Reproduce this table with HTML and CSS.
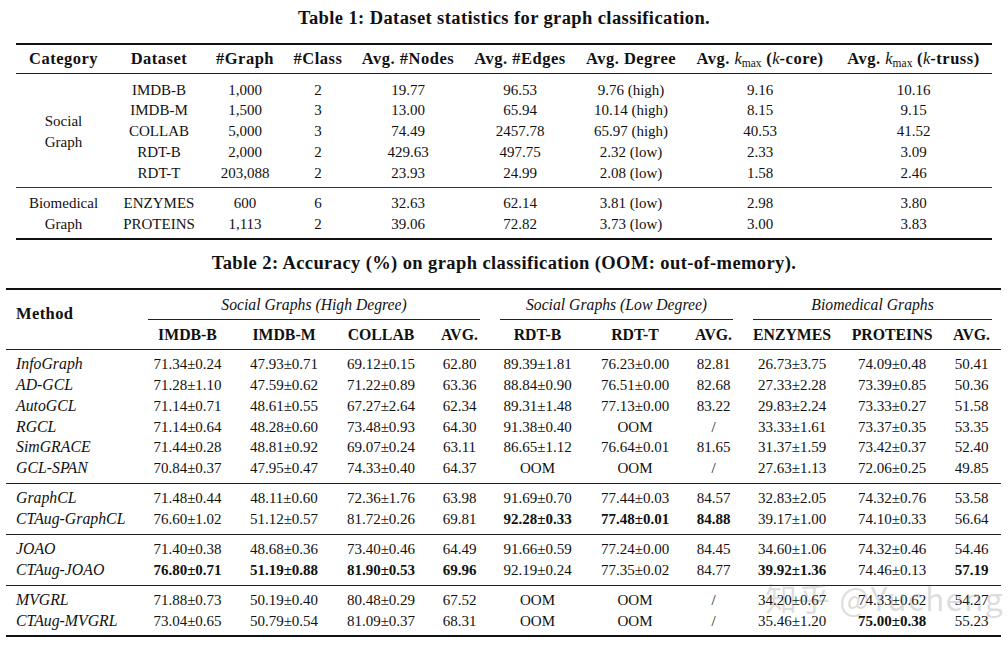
FILE: index.html
```html
<!DOCTYPE html>
<html>
<head>
<meta charset="utf-8">
<link rel="stylesheet" href="styles.css">
</head>
<body>
<div class="page">
  <div class="caption cap1">Table 1: Dataset statistics for graph classification.</div>
  <table class="t1">
    <colgroup>
      <col class="w95"><col class="w96"><col class="w76"><col class="w70"><col class="w110"><col class="w114"><col class="w108"><col class="w150"><col class="w157">
    </colgroup>
    <thead>
      <tr>
        <th>Category</th><th>Dataset</th><th>#Graph</th><th>#Class</th><th>Avg. #Nodes</th><th>Avg. #Edges</th><th>Avg. Degree</th>
        <th>Avg. <span class="k">k</span><span class="sub">max</span> (<span class="k">k</span>-core)</th>
        <th>Avg. <span class="k">k</span><span class="sub">max</span> (<span class="k">k</span>-truss)</th>
      </tr>
    </thead>
    <tbody>
      <tr class="first"><td rowspan="5" class="cat">Social<br>Graph</td><td>IMDB-B</td><td>1,000</td><td>2</td><td>19.77</td><td>96.53</td><td>9.76 (high)</td><td>9.16</td><td>10.16</td></tr>
      <tr><td>IMDB-M</td><td>1,500</td><td>3</td><td>13.00</td><td>65.94</td><td>10.14 (high)</td><td>8.15</td><td>9.15</td></tr>
      <tr><td>COLLAB</td><td>5,000</td><td>3</td><td>74.49</td><td>2457.78</td><td>65.97 (high)</td><td>40.53</td><td>41.52</td></tr>
      <tr><td>RDT-B</td><td>2,000</td><td>2</td><td>429.63</td><td>497.75</td><td>2.32 (low)</td><td>2.33</td><td>3.09</td></tr>
      <tr class="last"><td>RDT-T</td><td>203,088</td><td>2</td><td>23.93</td><td>24.99</td><td>2.08 (low)</td><td>1.58</td><td>2.46</td></tr>
    </tbody>
    <tbody>
      <tr class="first"><td rowspan="2" class="cat">Biomedical<br>Graph</td><td>ENZYMES</td><td>600</td><td>6</td><td>32.63</td><td>62.14</td><td>3.81 (low)</td><td>2.98</td><td>3.80</td></tr>
      <tr class="last"><td>PROTEINS</td><td>1,113</td><td>2</td><td>39.06</td><td>72.82</td><td>3.73 (low)</td><td>3.00</td><td>3.83</td></tr>
    </tbody>
  </table>

  <div class="caption cap2">Table 2: Accuracy (%) on graph classification (OOM: out-of-memory).</div>
  <table class="t2">
    <colgroup>
      <col class="w134"><col class="w95"><col class="w98"><col class="w96"><col class="w61"><col class="w95"><col class="w100"><col class="w57"><col class="w100"><col class="w100"><col class="w59">
    </colgroup>
    <thead>
      <tr class="grouprow">
        <th rowspan="2" class="method">Method</th>
        <th colspan="4" class="grp"><div class="cmid g1">Social Graphs (High Degree)</div></th>
        <th colspan="3" class="grp"><div class="cmid g2">Social Graphs (Low Degree)</div></th>
        <th colspan="3" class="grp"><div class="cmid g3">Biomedical Graphs</div></th>
      </tr>
      <tr class="subrow">
        <th>IMDB-B</th><th>IMDB-M</th><th>COLLAB</th><th>AVG.</th>
        <th>RDT-B</th><th>RDT-T</th><th>AVG.</th>
        <th>ENZYMES</th><th>PROTEINS</th><th>AVG.</th>
      </tr>
    </thead>
    <tbody>
      <tr class="first"><td class="m">InfoGraph</td><td>71.34±0.24</td><td>47.93±0.71</td><td>69.12±0.15</td><td>62.80</td><td>89.39±1.81</td><td>76.23±0.00</td><td>82.81</td><td>26.73±3.75</td><td>74.09±0.48</td><td>50.41</td></tr>
      <tr><td class="m">AD-GCL</td><td>71.28±1.10</td><td>47.59±0.62</td><td>71.22±0.89</td><td>63.36</td><td>88.84±0.90</td><td>76.51±0.00</td><td>82.68</td><td>27.33±2.28</td><td>73.39±0.85</td><td>50.36</td></tr>
      <tr><td class="m">AutoGCL</td><td>71.14±0.71</td><td>48.61±0.55</td><td>67.27±2.64</td><td>62.34</td><td>89.31±1.48</td><td>77.13±0.00</td><td>83.22</td><td>29.83±2.24</td><td>73.33±0.27</td><td>51.58</td></tr>
      <tr><td class="m">RGCL</td><td>71.14±0.64</td><td>48.28±0.60</td><td>73.48±0.93</td><td>64.30</td><td>91.38±0.40</td><td>OOM</td><td>/</td><td>33.33±1.61</td><td>73.37±0.35</td><td>53.35</td></tr>
      <tr><td class="m">SimGRACE</td><td>71.44±0.28</td><td>48.81±0.92</td><td>69.07±0.24</td><td>63.11</td><td>86.65±1.12</td><td>76.64±0.01</td><td>81.65</td><td>31.37±1.59</td><td>73.42±0.37</td><td>52.40</td></tr>
      <tr class="last"><td class="m">GCL-SPAN</td><td>70.84±0.37</td><td>47.95±0.47</td><td>74.33±0.40</td><td>64.37</td><td>OOM</td><td>OOM</td><td>/</td><td>27.63±1.13</td><td>72.06±0.25</td><td>49.85</td></tr>
    </tbody>
    <tbody>
      <tr class="first"><td class="m">GraphCL</td><td>71.48±0.44</td><td>48.11±0.60</td><td>72.36±1.76</td><td>63.98</td><td>91.69±0.70</td><td>77.44±0.03</td><td>84.57</td><td>32.83±2.05</td><td>74.32±0.76</td><td>53.58</td></tr>
      <tr class="last"><td class="m">CTAug-GraphCL</td><td>76.60±1.02</td><td>51.12±0.57</td><td>81.72±0.26</td><td>69.81</td><td class="b">92.28±0.33</td><td class="b">77.48±0.01</td><td class="b">84.88</td><td>39.17±1.00</td><td>74.10±0.33</td><td>56.64</td></tr>
    </tbody>
    <tbody>
      <tr class="first"><td class="m">JOAO</td><td>71.40±0.38</td><td>48.68±0.36</td><td>73.40±0.46</td><td>64.49</td><td>91.66±0.59</td><td>77.24±0.00</td><td>84.45</td><td>34.60±1.06</td><td>74.32±0.46</td><td>54.46</td></tr>
      <tr class="last"><td class="m">CTAug-JOAO</td><td class="b">76.80±0.71</td><td class="b">51.19±0.88</td><td class="b">81.90±0.53</td><td class="b">69.96</td><td>92.19±0.24</td><td>77.35±0.02</td><td>84.77</td><td class="b">39.92±1.36</td><td>74.46±0.13</td><td class="b">57.19</td></tr>
    </tbody>
    <tbody>
      <tr class="first"><td class="m">MVGRL</td><td>71.88±0.73</td><td>50.19±0.40</td><td>80.48±0.29</td><td>67.52</td><td>OOM</td><td>OOM</td><td>/</td><td>34.20±0.67</td><td>74.33±0.62</td><td>54.27</td></tr>
      <tr class="last"><td class="m">CTAug-MVGRL</td><td>73.04±0.65</td><td>50.79±0.54</td><td>81.09±0.37</td><td>68.31</td><td>OOM</td><td>OOM</td><td>/</td><td>35.46±1.20</td><td class="b">75.00±0.38</td><td>55.23</td></tr>
    </tbody>
  </table>
  <div class="watermark">知乎 @Yucheng</div>
</div>
</body>
</html>
```

FILE: styles.css
```css
html, body {
  margin: 0;
  padding: 0;
  background: #ffffff;
}
body {
  font-family: "Liberation Serif", "Times New Roman", serif;
  color: #111;
}
.page {
  position: relative;
  width: 1008px;
  height: 645px;
  overflow: hidden;
  display: flex;
  flex-direction: column;
  align-items: flex-start;
}
.caption {
  width: 1008px;
  text-align: center;
  font-weight: bold;
  font-size: 18.5px;
  letter-spacing: 0.4px;
  line-height: 20px;
}
.cap1 { margin-top: 8px; }
.cap2 { margin-top: 13px; }

table {
  border-collapse: collapse;
  table-layout: fixed;
  border-top: 2px solid #111;
  border-bottom: 2px solid #111;
}
th, td {
  padding: 0;
  text-align: center;
  white-space: nowrap;
}

/* Table 1 */
.t1 {
  margin-top: 15px;
  margin-left: 16px;
  width: 976px;
  font-size: 15px;
}
.t1 th {
  font-weight: bold;
  font-size: 16.5px;
  letter-spacing: 0.5px;
  height: 28px;
  line-height: 28px;
  border-bottom: 1px solid #222;
}
.t1 td { line-height: 20.8px; }
.t1 tbody + tbody { border-top: 1px solid #333; }
.t1 tr.first td { padding-top: 5.5px; }
.t1 tr.last td { padding-bottom: 3px; }
.t1 td.cat { padding: 0 0 3px 0; vertical-align: middle; line-height: 21px; }
.k { font-style: italic; font-weight: normal; letter-spacing: 0; }
.sub { font-weight: normal; font-size: 11.5px; letter-spacing: 0; vertical-align: -3px; line-height: 0; }

.w95 { width: 95px; }
.w96 { width: 96px; }
.w76 { width: 76px; }
.w70 { width: 70px; }
.w110 { width: 110px; }
.w114 { width: 114px; }
.w108 { width: 108px; }
.w150 { width: 150px; }
.w157 { width: 157px; }
.w134 { width: 134px; }
.w98 { width: 98px; }
.w61 { width: 61px; }
.w100 { width: 100px; }
.w57 { width: 57px; }
.w59 { width: 59px; }

/* Table 2 */
.t2 {
  margin-top: 15px;
  margin-left: 6px;
  width: 995px;
  font-size: 15px;
}
.t2 thead tr.grouprow th.grp {
  height: 30px;
  vertical-align: bottom;
  font-weight: normal;
}
.t2 thead tr.grouprow th.method {
  text-align: left;
  padding-left: 10px;
  padding-bottom: 10px;
  vertical-align: middle;
  font-weight: bold;
  font-size: 16.5px;
  letter-spacing: 0.4px;
  border-bottom: 1px solid #222;
}
.cmid {
  font-style: italic;
  font-size: 15.7px;
  line-height: 29px;
  border-bottom: 1px solid #222;
}
.g1 { margin: 0 10px 0 8px; }
.g2 { margin: 0 9px 0 10px; }
.g3 { margin: 0 9px 0 11px; }
.t2 tr.subrow th {
  font-weight: bold;
  font-size: 15.8px;
  height: 29px;
  line-height: 29px;
  border-bottom: 1px solid #222;
}
.t2 td { line-height: 20.7px; }
.t2 td.m {
  text-align: left;
  padding-left: 10px;
  font-style: italic;
  font-size: 15.8px;
}
.t2 td.b { font-weight: bold; }
.t2 tbody + tbody { border-top: 1px solid #222; }
.t2 tr.first td { padding-top: 4.5px; }
.t2 tr.last td { padding-bottom: 4px; }

.watermark {
  position: absolute;
  left: 765px;
  top: 577px;
  font-family: "Noto Sans CJK SC", "Noto Sans", sans-serif;
  font-size: 32px;
  line-height: 40px;
  color: rgba(120, 120, 120, 0.25);
  white-space: nowrap;
  letter-spacing: 1px;
}
```
